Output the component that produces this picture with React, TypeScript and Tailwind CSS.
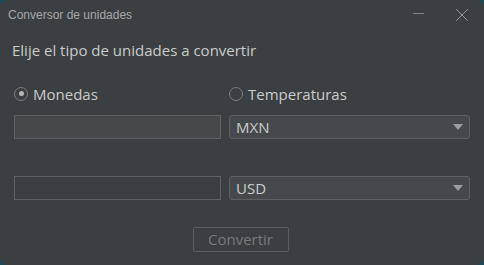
import { X, Minus } from "lucide-react"

function Radio({ label, checked }: { label: string; checked?: boolean }) {
  return (
    <label className="flex items-center gap-[5px]">
      <span className="flex h-[14px] w-[14px] items-center justify-center rounded-full border border-[#7a7d80] bg-[#3c3f41]">
        {checked && <span className="h-[5px] w-[5px] rounded-full bg-[#b8b8b8]" />}
      </span>
      <span className="text-[15px] text-[#c9cbcc]">{label}</span>
    </label>
  )
}

function Combo({ value }: { value: string }) {
  return (
    <div className="flex h-[24px] w-[241px] items-center justify-between rounded-[3px] border border-[#5e6163] bg-[#46494b] pl-[6px] pr-[6px]">
      <span className="text-[15px] text-[#c9cbcc]">{value}</span>
      <span className="h-0 w-0 border-x-[5px] border-t-[6px] border-x-transparent border-t-[#9a9c9e]" />
    </div>
  )
}

export default function App() {
  return (
    <div className="h-[265px] w-[484px] bg-[#1c4a57] font-['Open_Sans',sans-serif]">
      <div className="flex h-full w-full flex-col rounded-[8px] bg-[#3c3f41]">
        <div className="flex h-[30px] items-center justify-between pl-[8px] pr-[11px]">
          <span className="font-['Liberation_Sans',sans-serif] text-[12px] text-[#a4a6a8]">Conversor de unidades</span>
          <div className="flex items-center gap-[24px]">
            <Minus className="-mt-[4px] h-[17px] w-[17px] text-[#9c9ea0]" strokeWidth={1} />
            <X className="h-[22px] w-[22px] text-[#9c9ea0]" strokeWidth={1} />
          </div>
        </div>
        <div className="flex flex-col pl-[12px] pr-[15px]">
          <p className="mt-[9px] text-[15px] text-[#c9cbcc]">Elije el tipo de unidades a convertir</p>
          <div className="mt-[21px] grid grid-cols-[207px_241px] gap-x-[8px] pl-[2px]">
            <Radio label="Monedas" checked />
            <Radio label="Temperaturas" />
          </div>
          <div className="mt-[10px] grid grid-cols-[207px_241px] gap-x-[8px] pl-[2px]">
            <div className="h-[24px] border border-[#5e6163] bg-[#45494a]" />
            <Combo value="MXN" />
          </div>
          <div className="mt-[37px] grid grid-cols-[207px_241px] gap-x-[8px] pl-[2px]">
            <div className="h-[24px] border border-[#5e6163] bg-[#3c3f41]" />
            <Combo value="USD" />
          </div>
          <div className="mt-[27px] flex justify-center">
            <button className="h-[25px] w-[96px] rounded-[2px] border border-[#595c5e] text-[15px] text-[#77797b]">
              Convertir
            </button>
          </div>
        </div>
      </div>
    </div>
  )
}
